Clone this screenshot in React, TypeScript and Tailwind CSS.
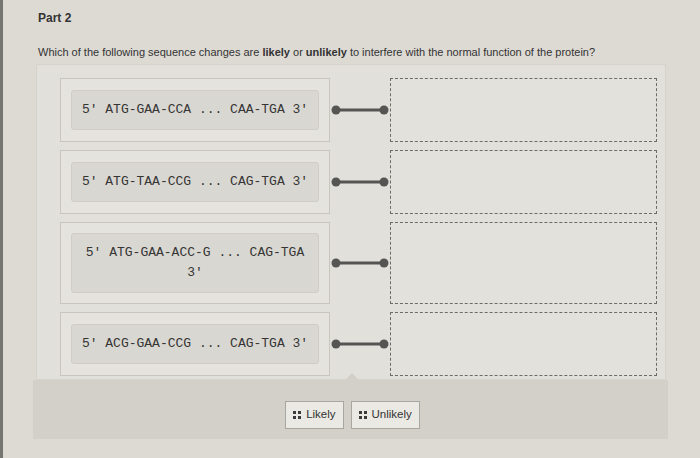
import React from "react";

type Sequence = {
  id: number;
  lines: string[];
  rowHeight: string;
};

const sequences: Sequence[] = [
  { id: 1, lines: ["5′ ATG-GAA-CCA ... CAA-TGA 3′"], rowHeight: "h-[64px]" },
  { id: 2, lines: ["5′ ATG-TAA-CCG ... CAG-TGA 3′"], rowHeight: "h-[64px]" },
  { id: 3, lines: ["5′ ATG-GAA-ACC-G ... CAG-TGA", "3′"], rowHeight: "h-[82px]" },
  { id: 4, lines: ["5′ ACG-GAA-CCG ... CAG-TGA 3′"], rowHeight: "h-[64px]" },
];

const GripIcon = () => (
  <svg width="8" height="8" viewBox="0 0 8 8" className="shrink-0">
    <rect x="0" y="0" width="3" height="3" fill="#3a3a3a" />
    <rect x="5" y="0" width="3" height="3" fill="#3a3a3a" />
    <rect x="0" y="5" width="3" height="3" fill="#3a3a3a" />
    <rect x="5" y="5" width="3" height="3" fill="#3a3a3a" />
  </svg>
);

const Connector = () => (
  <svg width="60" height="12" viewBox="0 0 60 12" className="shrink-0">
    <line x1="6" y1="6" x2="54" y2="6" stroke="#555553" strokeWidth="3" />
    <circle cx="6" cy="6" r="4.5" fill="#555553" />
    <circle cx="54" cy="6" r="4.5" fill="#555553" />
  </svg>
);

const App = () => {
  return (
    <div
      className="relative h-[458px] w-[700px] overflow-hidden bg-[#dddad4] text-[#2f2f2f]"
      style={{ fontFamily: '"Liberation Sans", Arial, sans-serif' }}
    >
      {/* monitor edge */}
      <div className="absolute left-0 top-0 h-full w-[3px] bg-[#77756f]" />

      <div className="pl-[38px] pt-[9px]">
        <h2 className="text-[12px] font-bold text-[#333]">Part 2</h2>
        <p className="mt-[17px] text-[11px] text-[#333]">
          Which of the following sequence changes are <b>likely</b> or{" "}
          <b>unlikely</b> to interfere with the normal function of the protein?
        </p>
      </div>

      {/* matching area */}
      <section className="ml-[36px] mt-[3px] w-[630px] border border-[#d6d3cc] bg-[#e2e0da] pb-[3px] pl-[23px] pr-[8px] pt-[13px]">
        <div className="flex flex-col gap-[8px]">
          {sequences.map((seq) => (
            <div key={seq.id} className={`flex items-center ${seq.rowHeight}`}>
              <div className="flex h-full w-[270px] shrink-0 items-center border border-[#c8c5be] bg-[#e5e3de] px-[10px]">
                <div
                  className="flex w-full flex-col items-center rounded-[3px] border border-[#d0cdc7] bg-[#d9d7d1] px-[8px] py-[9px] text-[13px] leading-[20px] text-[#353535]"
                  style={{ fontFamily: '"Liberation Mono", "Courier New", monospace' }}
                >
                  {seq.lines.map((line) => (
                    <span key={line} className="whitespace-pre">
                      {line}
                    </span>
                  ))}
                </div>
              </div>

              <Connector />

              <div className="h-full flex-1 border border-dashed border-[#6d6b67] bg-[#e3e1dc]" />
            </div>
          ))}
        </div>
      </section>

      {/* answer bank */}
      <div className="relative ml-[33px] flex h-[59px] w-[635px] items-center justify-center gap-[7px] bg-[#d3d0c9] pl-[4px] pt-[12px]">
        <div className="absolute left-[312px] top-[-7px] h-0 w-0 border-x-[7px] border-b-[7px] border-x-transparent border-b-[#d3d0c9]" />
        <button className="flex h-[28px] items-center gap-[5px] border border-[#a8a6a1] bg-[#ebe9e4] px-[7px] text-[11.5px] text-[#333]">
          <GripIcon />
          Likely
        </button>
        <button className="flex h-[28px] items-center gap-[5px] border border-[#a8a6a1] bg-[#ebe9e4] px-[7px] text-[11.5px] text-[#333]">
          <GripIcon />
          Unlikely
        </button>
      </div>
    </div>
  );
};

export default App;
